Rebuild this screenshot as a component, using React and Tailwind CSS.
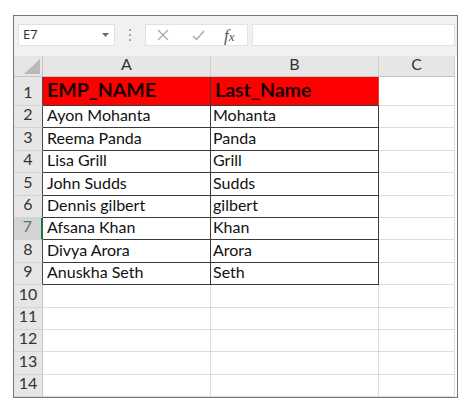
import React from "react";

const rows = [
  ["Ayon Mohanta", "Mohanta"],
  ["Reema Panda", "Panda"],
  ["Lisa Grill", "Grill"],
  ["John Sudds", "Sudds"],
  ["Dennis gilbert", "gilbert"],
  ["Afsana Khan", "Khan"],
  ["Divya Arora", "Arora"],
  ["Anuskha Seth", "Seth"],
];

function RowHead({ n, dark, selected }) {
  return (
    <div
      className={
        "flex items-end pb-[1px] justify-center border-b border-b-[#d4d4d4] text-[16px] " +
        (selected
          ? "bg-[#d3d3d3] text-[#4f7a5e] border-r-2 border-r-[#217346]"
          : dark
          ? "bg-[#e6e6e6] text-[#333] border-r border-r-[#4a4a4a]"
          : "bg-[#e6e6e6] text-[#333] border-r border-r-[#c4c4c4]")
      }
    >
      {n}
    </div>
  );
}

export default function App() {
  return (
    <div
      className="w-[474px] h-[413px] bg-white pt-[15px] pl-[13px]"
      style={{ fontFamily: "Lato, 'Noto Sans', sans-serif" }}
    >
      <div className="w-[445px] h-[383px] border border-[#777] bg-[#f1f1f1] flex flex-col overflow-hidden">
        {/* toolbar */}
        <div className="h-[40px] flex items-start pt-[8px] pl-[4px] shrink-0">
          <div className="w-[97px] h-[22px] bg-white border border-[#e0e0e0] flex items-center justify-between pl-[4px] pr-[5px]">
            <span className="text-[13px] text-[#333]" style={{ fontFamily: "'Noto Sans', sans-serif" }}>E7</span>
            <svg width="7" height="4" viewBox="0 0 7 4">
              <path d="M0 0 L7 0 L3.5 4 Z" fill="#6a6a6a" />
            </svg>
          </div>
          <div className="w-[30px] h-[22px] flex flex-col items-center justify-center gap-[3px]">
            <span className="w-[2px] h-[2px] bg-[#a8a8a8]" />
            <span className="w-[2px] h-[2px] bg-[#a8a8a8]" />
            <span className="w-[2px] h-[2px] bg-[#a8a8a8]" />
          </div>
          <div className="w-[103px] h-[22px] bg-white border border-[#e2e2e2] flex items-center">
            <svg className="ml-[11px]" width="12" height="12" viewBox="0 0 12 12">
              <path d="M1 1 L11 11 M11 1 L1 11" stroke="#a9a9a9" strokeWidth="1.3" />
            </svg>
            <svg className="ml-[23px]" width="13" height="11" viewBox="0 0 13 11">
              <path d="M1 6 L4.5 9.5 L12 1" stroke="#a9a9a9" strokeWidth="1.5" fill="none" />
            </svg>
            <span
              className="ml-[19px] text-[17px] italic text-[#555] leading-none"
              style={{ fontFamily: "'Liberation Serif', serif" }}
            >
              f<span className="text-[13px]">x</span>
            </span>
          </div>
          <div className="ml-[4px] w-[203px] h-[22px] bg-white border border-[#e2e2e2]" />
        </div>
        {/* grid */}
        <div className="grid grid-cols-[29px_168px_168px_76px] grid-rows-[21px_29px_repeat(13,22.4px)] bg-white">
          <div className="bg-[#e6e6e6] border-r border-b border-[#c4c4c4] relative">
            <svg className="absolute right-[2px] bottom-[2px]" width="16" height="15" viewBox="0 0 16 15">
              <path d="M16 0 L16 15 L0 15 Z" fill="#b9b9b9" />
            </svg>
          </div>
          {["A", "B", "C"].map((c) => (
            <div
              key={c}
              className="bg-[#e6e6e6] border-r border-r-[#cfcfcf] border-b border-b-[#c4c4c4] flex items-end justify-center pb-[0px] text-[16px] text-[#333]"
            >
              {c}
            </div>
          ))}
          {/* row 1 */}
          <RowHead n={1} dark />
          <div className="bg-[#ff0000] border-r border-b border-[#3a3a3a] flex items-end pl-[4px] pb-[1px] text-[19.5px] font-bold text-[#1a0000]">
            EMP_NAME
          </div>
          <div className="bg-[#ff0000] border-r border-r-[#e04040] border-b border-b-[#3a3a3a] flex items-end pl-[4px] pb-[1px] text-[19.5px] font-bold text-[#1a0000]">
            Last_Name
          </div>
          <div className="border-r border-b border-[#dcdcdc]" />
          {rows.map((r, i) => (
            <React.Fragment key={i}>
              <RowHead n={i + 2} dark selected={i + 2 === 7} />
              <div className="border-r border-b border-[#3a3a3a] flex items-end pl-[4px] pb-[0px] text-[16px] text-[#111]">
                {r[0]}
              </div>
              <div className="border-r border-b border-[#3a3a3a] flex items-end pl-[2px] pb-[0px] text-[16px] text-[#111]">
                {r[1]}
              </div>
              <div className="border-r border-b border-[#dcdcdc]" />
            </React.Fragment>
          ))}
          {[10, 11, 12, 13, 14].map((n) => (
            <React.Fragment key={n}>
              <RowHead n={n} />
              <div className="border-r border-b border-[#dcdcdc]" />
              <div className="border-r border-b border-[#dcdcdc]" />
              <div className="border-r border-b border-[#dcdcdc]" />
            </React.Fragment>
          ))}
        </div>
      </div>
    </div>
  );
}
